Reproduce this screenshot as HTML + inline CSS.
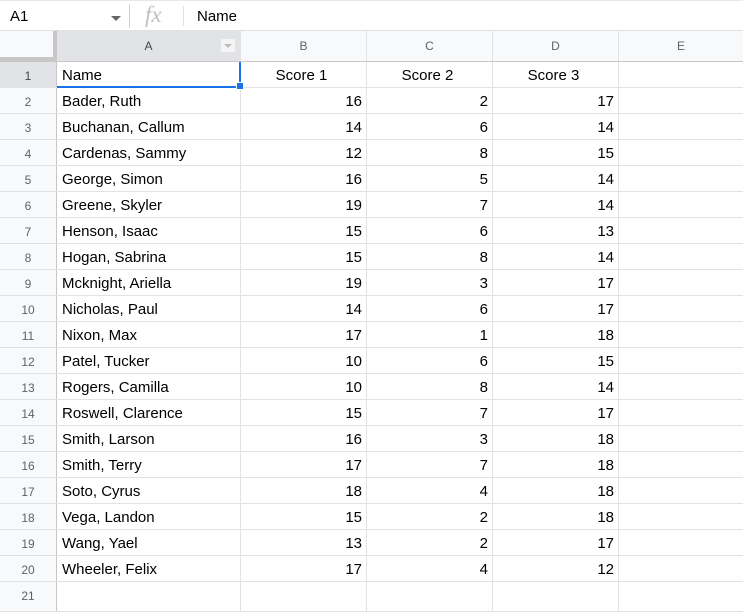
<!DOCTYPE html><html><head><style>
*{box-sizing:border-box;margin:0;padding:0}
body{width:743px;height:606px;overflow:hidden;background:#fff;font-family:"Liberation Sans",Arial,sans-serif;position:relative}
.fb{position:absolute;left:0;top:0;width:743px;height:31px;border-bottom:1px solid #e0e0e0;border-top:1px solid #e8e8e8}
.r{display:flex;height:26px;border-bottom:1px solid #e2e2e2}
.c{border-right:1px solid #e2e2e2;font-size:15px;color:#000;line-height:28px;white-space:nowrap;overflow:hidden}
.h{width:57px;background:#f8f9fa;color:#5f6368;font-size:12px;text-align:center;border-right:1px solid #c7c7c7}
.a{width:184px;padding-left:5px}
.n{width:126px;text-align:right;padding-right:4px}
.e{width:124px;border-right:none}
.hd .c{background:#f8f9fa;color:#5f6368;font-size:12px;text-align:center;line-height:30px;padding:0}
</style></head><body>
<div class="fb">
<div style="position:absolute;left:10px;top:7px;font-size:15px">A1</div>
<div style="position:absolute;left:111px;top:15px;width:0;height:0;border-left:5px solid transparent;border-right:5px solid transparent;border-top:5px solid #666"></div>
<div style="position:absolute;left:129px;top:3px;width:1px;height:24px;background:#d0d0d0"></div>
<div style="position:absolute;left:145px;top:1px;font-family:'Liberation Serif',serif;font-style:italic;font-size:23px;color:#c0c0c0">fx</div>
<div style="position:absolute;left:183px;top:5px;width:1px;height:20px;background:#e0e0e0"></div>
<div style="position:absolute;left:197px;top:7px;font-size:15px">Name</div>
</div>
<div style="position:absolute;left:0;top:31px;width:743px">
<div class="r hd" style="height:31px;border-bottom:1px solid #c7c7c7">
<div class="c" style="width:57px;border-right:4px solid #c7c7c7;border-bottom:4px solid #c7c7c7;height:30px;background:#f8f9fa"></div>
<div class="c" style="width:184px;background:#e1e3e6;position:relative;color:#444">A<span style="position:absolute;right:5px;top:8px;width:14px;height:13px;background:#f4f4f4;"><span style="position:absolute;left:3px;top:5px;border-left:4px solid transparent;border-right:4px solid transparent;border-top:4px solid #bbb"></span></span></div>
<div class="c" style="width:126px">B</div><div class="c" style="width:126px">C</div><div class="c" style="width:126px">D</div><div class="c" style="width:124px;border-right:none">E</div>
</div>
<div class="r"><div class="c h" style="background:#e1e3e6;color:#444">1</div><div class="c a" style="border-bottom:2px solid #1a73e8;border-right:2px solid #1a73e8;height:26px;position:relative">Name</div><div class="c n" style="text-align:center">Score 1</div><div class="c n" style="text-align:center">Score 2</div><div class="c n" style="text-align:center">Score 3</div><div class="c e"></div></div>
<div class="r"><div class="c h">2</div><div class="c a">Bader, Ruth</div><div class="c n">16</div><div class="c n">2</div><div class="c n">17</div><div class="c e"></div></div>
<div class="r"><div class="c h">3</div><div class="c a">Buchanan, Callum</div><div class="c n">14</div><div class="c n">6</div><div class="c n">14</div><div class="c e"></div></div>
<div class="r"><div class="c h">4</div><div class="c a">Cardenas, Sammy</div><div class="c n">12</div><div class="c n">8</div><div class="c n">15</div><div class="c e"></div></div>
<div class="r"><div class="c h">5</div><div class="c a">George, Simon</div><div class="c n">16</div><div class="c n">5</div><div class="c n">14</div><div class="c e"></div></div>
<div class="r"><div class="c h">6</div><div class="c a">Greene, Skyler</div><div class="c n">19</div><div class="c n">7</div><div class="c n">14</div><div class="c e"></div></div>
<div class="r"><div class="c h">7</div><div class="c a">Henson, Isaac</div><div class="c n">15</div><div class="c n">6</div><div class="c n">13</div><div class="c e"></div></div>
<div class="r"><div class="c h">8</div><div class="c a">Hogan, Sabrina</div><div class="c n">15</div><div class="c n">8</div><div class="c n">14</div><div class="c e"></div></div>
<div class="r"><div class="c h">9</div><div class="c a">Mcknight, Ariella</div><div class="c n">19</div><div class="c n">3</div><div class="c n">17</div><div class="c e"></div></div>
<div class="r"><div class="c h">10</div><div class="c a">Nicholas, Paul</div><div class="c n">14</div><div class="c n">6</div><div class="c n">17</div><div class="c e"></div></div>
<div class="r"><div class="c h">11</div><div class="c a">Nixon, Max</div><div class="c n">17</div><div class="c n">1</div><div class="c n">18</div><div class="c e"></div></div>
<div class="r"><div class="c h">12</div><div class="c a">Patel, Tucker</div><div class="c n">10</div><div class="c n">6</div><div class="c n">15</div><div class="c e"></div></div>
<div class="r"><div class="c h">13</div><div class="c a">Rogers, Camilla</div><div class="c n">10</div><div class="c n">8</div><div class="c n">14</div><div class="c e"></div></div>
<div class="r"><div class="c h">14</div><div class="c a">Roswell, Clarence</div><div class="c n">15</div><div class="c n">7</div><div class="c n">17</div><div class="c e"></div></div>
<div class="r"><div class="c h">15</div><div class="c a">Smith, Larson</div><div class="c n">16</div><div class="c n">3</div><div class="c n">18</div><div class="c e"></div></div>
<div class="r"><div class="c h">16</div><div class="c a">Smith, Terry</div><div class="c n">17</div><div class="c n">7</div><div class="c n">18</div><div class="c e"></div></div>
<div class="r"><div class="c h">17</div><div class="c a">Soto, Cyrus</div><div class="c n">18</div><div class="c n">4</div><div class="c n">18</div><div class="c e"></div></div>
<div class="r"><div class="c h">18</div><div class="c a">Vega, Landon</div><div class="c n">15</div><div class="c n">2</div><div class="c n">18</div><div class="c e"></div></div>
<div class="r"><div class="c h">19</div><div class="c a">Wang, Yael</div><div class="c n">13</div><div class="c n">2</div><div class="c n">17</div><div class="c e"></div></div>
<div class="r"><div class="c h">20</div><div class="c a">Wheeler, Felix</div><div class="c n">17</div><div class="c n">4</div><div class="c n">12</div><div class="c e"></div></div>
<div class="r" style="height:30px"><div class="c h">21</div><div class="c a"></div><div class="c n"></div><div class="c n"></div><div class="c n"></div><div class="c e"></div></div>
</div>
<div style="position:absolute;left:236px;top:82px;width:8px;height:8px;background:#1a73e8;border:1px solid #fff"></div>
</body></html>
